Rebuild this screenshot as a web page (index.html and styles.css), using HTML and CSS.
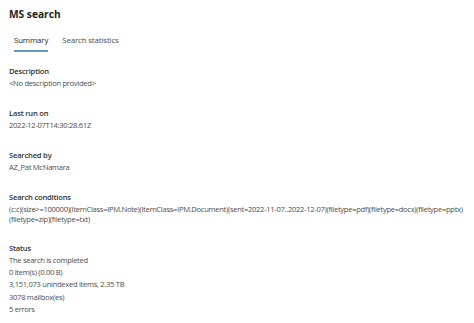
FILE: index.html
```html
<!DOCTYPE html>
<html>
<head>
<meta charset="utf-8">
<link rel="stylesheet" href="styles.css">
</head>
<body>
<div class="panel">
  <h1 class="title">MS search</h1>
  <div class="tabs">
    <div class="tab active">Summary</div>
    <div class="tab">Search statistics</div>
  </div>
  <div class="content">
    <div class="field">
      <div class="label">Description</div>
      <div class="value">&lt;No description provided&gt;</div>
    </div>
    <div class="field">
      <div class="label">Last run on</div>
      <div class="value">2022-12-07T14:30:28.61Z</div>
    </div>
    <div class="field">
      <div class="label">Searched by</div>
      <div class="value">AZ_Pat McNamara</div>
    </div>
    <div class="field">
      <div class="label">Search conditions</div>
      <div class="value wrap">(c:c)(size&gt;=100000)(ItemClass=IPM.Note)(ItemClass=IPM.Document)(sent=2022-11-07..2022-12-07)(filetype=pdf)(filetype=docx)(filetype=pptx)<br>(filetype=zip)(filetype=txt)</div>
    </div>
    <div class="field">
      <div class="label">Status</div>
      <div class="value">The search is completed</div>
      <div class="value">0 item(s) (0.00 B)</div>
      <div class="value">3,151,073 unindexed items, 2.35 TB</div>
      <div class="value">3078 mailbox(es)</div>
      <div class="value">5 errors</div>
    </div>
  </div>
</div>
</body>
</html>
```
FILE: styles.css
```css
html, body {
  margin: 0;
  padding: 0;
  background: #ffffff;
}
body {
  font-family: "Open Sans", "Noto Sans", sans-serif;
  color: #323130;
}
.panel {
  padding: 7px 9px 0 9px;
}
.title {
  margin: 0;
  font-size: 10.2px;
  font-weight: 700;
  line-height: 14px;
  color: #252423;
}
.tabs {
  display: flex;
  gap: 14px;
  margin-top: 13px;
  padding-left: 5px;
}
.tab {
  font-size: 7.8px;
  line-height: 12px;
  letter-spacing: -0.1px;
  color: #4a4a4a;
  padding-bottom: 4px;
  border-bottom: 2px solid transparent;
}
.tab.active {
  color: #252423;
  border-bottom-color: #5b9bc8;
}
.content {
  display: flex;
  flex-direction: column;
  gap: 17.5px;
  margin-top: 13px;
}
.label {
  font-size: 7.6px;
  font-weight: 600;
  line-height: 12.3px;
  letter-spacing: -0.2px;
  color: #323130;
}
.value {
  font-size: 7.6px;
  line-height: 12.3px;
  letter-spacing: -0.3px;
  color: #504f4e;
  white-space: nowrap;
}
.value.wrap {
  line-height: 10px;
  padding-top: 0.5px;
}
```
